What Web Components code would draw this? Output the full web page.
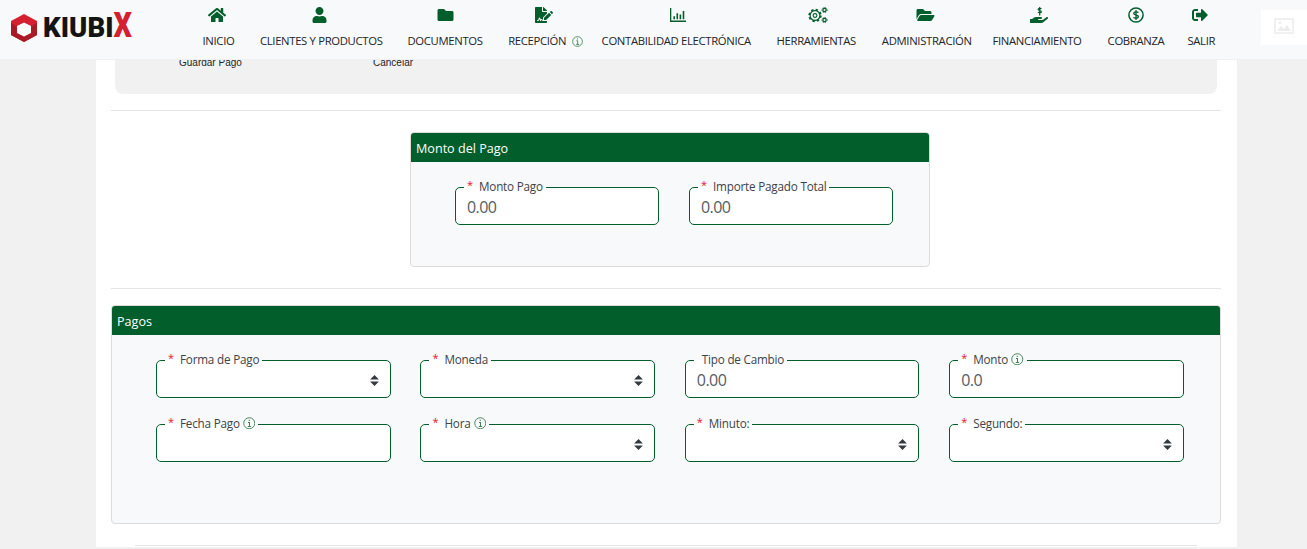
<!DOCTYPE html>
<html lang="es">
<head>
<meta charset="utf-8">
<title>Kiubix</title>
<style>
    html, body { margin: 0; height: 549px; overflow: hidden; }
    body { background: #f1f1f1; font-family: "Open Sans", "Noto Sans", sans-serif; color: #212529; }
</style>
</head>
<body>
<app-nav>
    <nav-item label="INICIO" w="58"><svg style="margin-left:-3px" viewBox="0 0 576 512" width="18" height="16" fill="#025e2b"><path d="M280.37 148.26L96 300.11V464a16 16 0 0 0 16 16l112.06-.29a16 16 0 0 0 15.92-16V368a16 16 0 0 1 16-16h64a16 16 0 0 1 16 16v95.64a16 16 0 0 0 16 16.05L464 480a16 16 0 0 0 16-16V300L295.67 148.26a12.19 12.19 0 0 0-15.3 0zM571.6 251.47L488 182.56V44.05a12 12 0 0 0-12-12h-56a12 12 0 0 0-12 12v72.61L318.47 43a48 48 0 0 0-61 0L4.34 251.47a12 12 0 0 0-1.6 16.9l25.5 31A12 12 0 0 0 45.15 301l235.22-193.74a12.19 12.19 0 0 1 15.3 0L530.9 301a12 12 0 0 0 16.9-1.6l25.5-31a12 12 0 0 0-1.7-16.93z"/></svg></nav-item>
    <nav-item label="CLIENTES Y PRODUCTOS" w="147.5"><svg style="margin-left:-3px" viewBox="0 0 448 512" width="15" height="16" fill="#025e2b"><path d="M224 256c70.7 0 128-57.3 128-128S294.7 0 224 0 96 57.3 96 128s57.3 128 128 128zm89.6 32h-16.7c-22.2 10.2-46.9 16-72.9 16s-50.6-5.8-72.9-16h-16.7C60.2 288 0 348.2 0 422.4V464c0 26.5 21.5 48 48 48h352c26.5 0 48-21.5 48-48v-41.6c0-74.2-60.2-134.4-134.4-134.4z"/></svg></nav-item>
    <nav-item label="DOCUMENTOS" w="100"><svg viewBox="0 0 512 512" width="17" height="16" fill="#025e2b"><path d="M464 128H272l-64-64H48C21.49 64 0 85.49 0 112v288c0 26.51 21.49 48 48 48h416c26.51 0 48-21.49 48-48V176c0-26.51-21.49-48-48-48z"/></svg></nav-item>
    <nav-item label="RECEPCIÓN" w="101.5" info><svg style="margin-left:-3.5px" viewBox="0 0 576 512" width="18" height="16" fill="#025e2b"><path d="M218.17 424.14c-2.95-5.92-8.09-6.52-10.17-6.52s-7.22.59-10.02 6.19l-7.67 15.34c-6.37 12.78-25.03 11.37-29.48-2.09L144 386.59l-10.61 31.88c-5.89 17.66-22.38 29.53-41 29.53H80c-8.84 0-16-7.16-16-16s7.16-16 16-16h12.39c4.83 0 9.11-3.08 10.64-7.66l18.19-54.64c3.3-9.81 12.44-16.41 22.78-16.41s19.48 6.59 22.77 16.41l13.88 41.64c19.75-16.19 54.06-9.7 66 14.16 1.89 3.78 5.49 5.95 9.36 6.26v-82.12l128-127.09V160H248c-13.2 0-24-10.8-24-24V0H24C10.7 0 0 10.7 0 24v464c0 13.3 10.7 24 24 24h336c13.3 0 24-10.7 24-24v-40l-128-.11c-16.12-.31-30.58-9.28-37.83-23.75zM384 121.9c0-6.3-2.5-12.4-7-16.9L279.1 7c-4.5-4.5-10.6-7-17-7H256v128h128v-6.1zm-96 225.06V416h68.99l161.68-162.78-67.88-67.88L288 346.96zm280.54-179.63l-31.87-31.87c-9.94-9.94-26.07-9.94-36.01 0l-27.25 27.25 67.88 67.88 27.25-27.25c9.95-9.94 9.95-26.07 0-36.01z"/></svg></nav-item>
    <nav-item label="CONTABILIDAD ELECTRÓNICA" w="159.5"><svg style="margin-left:3.5px" viewBox="0 0 16 14" width="16" height="14" fill="#025e2b"><path d="M0 0h1.3v12.4H16V14H0z"/><path d="M3.4 8.2h1.6v3h-1.6zM6.5 5.2h1.6v6h-1.6zM9.6 6.6h1.6v4.6H9.6zM12.7 3h1.6v8.2h-1.6z"/></svg></nav-item>
    <nav-item label="HERRAMIENTAS" w="120.5"><svg style="margin-left:3.5px" viewBox="0 0 20 16" width="20" height="16" fill="none" stroke="#025e2b"><circle cx="7" cy="8.5" r="4.9" stroke-width="1.2"/><circle cx="7" cy="8.5" r="5.9" stroke-width="1.6" stroke-dasharray="2.4 2.23"/><circle cx="7" cy="8.5" r="1.9" stroke-width="1.1"/><circle cx="16.5" cy="3" r="1.6" stroke-width="1.2"/><circle cx="16.5" cy="3" r="2.6" stroke-width="1" stroke-dasharray="1.2 1.2"/><circle cx="16.5" cy="13" r="1.6" stroke-width="1.2"/><circle cx="16.5" cy="13" r="2.6" stroke-width="1" stroke-dasharray="1.2 1.2"/></svg></nav-item>
    <nav-item label="ADMINISTRACIÓN" w="100.5"><svg style="margin-left:-2.5px" viewBox="0 0 576 512" width="19" height="16" fill="#025e2b"><path d="M572.694 292.093L500.27 416.248A63.997 63.997 0 0 1 444.989 448H45.025c-18.523 0-30.064-20.093-20.731-36.093l72.424-124.155A64 64 0 0 1 152 256h399.964c18.523 0 30.064 20.093 20.73 36.093zM152 224h328v-48c0-26.51-21.49-48-48-48H272l-64-64H48C21.49 64 0 85.49 0 112v278.046l69.077-118.418C86.214 242.25 117.989 224 152 224z"/></svg></nav-item>
    <nav-item label="FINANCIAMIENTO" w="120"><svg style="margin-left:4px" viewBox="0 0 576 512" width="18" height="16"><path fill="#025e2b" d="M565.3 328.1c-11.8-10.7-30.2-10-42.6 0L430.3 402a63.64 63.64 0 0 1-40 14H272a16 16 0 0 1 0-32h78.29c15.9 0 30.71-10.9 33.25-26.6a31.2 31.2 0 0 0 .46-5.46A32 32 0 0 0 352 320H192a117.66 117.66 0 0 0-74.1 26.29L71.4 384H16a16 16 0 0 0-16 16v96a16 16 0 0 0 16 16h356.77a64 64 0 0 0 40-14L564 377a32 32 0 0 0 1.3-48.9z"/><path fill="none" stroke="#025e2b" stroke-width="40" d="M364 60c-14-24-98-26-104 14-6 44 104 30 104 78 0 40-92 40-108 10M310 0v270"/></svg></nav-item>
    <nav-item label="COBRANZA" w="78"><svg viewBox="0 0 16 16" width="16" height="16" fill="none" stroke="#025e2b"><circle cx="8" cy="8" r="7.1" stroke-width="1.5"/><path stroke-width="1.3" d="M10.4 5.6C9.9 4.6 5.8 4.2 5.7 6.3 5.6 8.6 10.5 7.4 10.4 9.8 10.3 11.8 6.1 11.5 5.5 10.3M8 3v10"/></svg></nav-item>
    <nav-item label="SALIR" w="52.5"><svg style="margin-left:-2.5px" viewBox="0 0 512 512" width="16" height="16" fill="#025e2b"><path d="M497 273L329 441c-15 15-41 4.5-41-17v-96H152c-13.3 0-24-10.7-24-24v-96c0-13.3 10.7-24 24-24h136V88c0-21.4 25.9-32 41-17l168 168c9.3 9.4 9.3 24.6 0 34zM192 436v-40c0-6.6-5.4-12-12-12H96c-17.7 0-32-14.3-32-32V160c0-17.7 14.3-32 32-32h84c6.6 0 12-5.4 12-12V76c0-6.6-5.4-12-12-12H96c-53 0-96 43-96 96v192c0 53 43 96 96 96h84c6.6 0 12-5.4 12-12z"/></svg></nav-item>
</app-nav>
<page-body>
    <action-bar></action-bar>
    <x-rule></x-rule>
    <pay-card title="Monto del Pago" class="small">
        <out-field label="Monto Pago" value="0.00" required></out-field>
        <out-field label="Importe Pagado Total" value="0.00" required></out-field>
    </pay-card>
    <x-rule></x-rule>
    <pay-card title="Pagos">
        <out-field label="Forma de Pago" required select></out-field>
        <out-field label="Moneda" required select></out-field>
        <out-field label="Tipo de Cambio" value="0.00"></out-field>
        <out-field label="Monto" value="0.0" required info></out-field>
        <out-field label="Fecha Pago" required info></out-field>
        <out-field label="Hora" required info select></out-field>
        <out-field label="Minuto:" required select></out-field>
        <out-field label="Segundo:" required select></out-field>
    </pay-card>
    <x-rule class="inner"></x-rule>
</page-body>
<script>
const infoIcon = (size) => `<svg class="info" viewBox="0 0 12 12" width="${size}" height="${size}" fill="none" stroke="#3f7f58"><circle cx="6" cy="6" r="5.3" stroke-width=".9"/><path stroke-width="1" d="M4.8 5.2H6.2V9M4.6 9.2h3.2M6 2.6v1.2"/></svg>`;

class AppNav extends HTMLElement {
    constructor() {
        super();
        this.attachShadow({ mode: 'open' });
        this.shadowRoot.innerHTML = `
            <style>
                :host {
                    display: flex;
                    position: relative;
                    z-index: 5;
                    height: 59px;
                    box-sizing: border-box;
                    background: #f8f9fa;
                    box-shadow: 0 1px 0 #f0f0f0;
                    padding-left: 10px;
                }
                .logo {
                    display: flex;
                    align-items: center;
                    width: 122px;
                    height: 28px;
                    margin: 14px 57.5px 0 0;
                    flex: none;
                }
                .word {
                    font: 900 27.5px/28px Roboto, "Liberation Sans", sans-serif;
                    color: #141414;
                    margin-left: 5px;
                    letter-spacing: .1px;
                }
                .word span {
                    color: #d4202f;
                    display: inline-block;
                    transform: scale(1.05, 1.3);
                    transform-origin: 50% 80%;
                }
                .items { display: flex; }
                .ph {
                    margin: 10px 0 0 auto;
                    width: 46px;
                    height: 35px;
                    background: #fff;
                    display: flex;
                    align-items: center;
                    justify-content: center;
                }
            </style>
            <div class="logo">
                <svg viewBox="0 0 28 28" width="28" height="28">
                    <path fill="#d4202f" d="M14 0l13 7v14l-13 7-13-7V7z"/>
                    <path fill="#a81a26" d="M1 9l6 3.500v6.500l7 3.500v5.500L1 21zM27 9l-6 3.500v6.500l-7 3.500v5.500l13-7z"/>
                    <path fill="#fff" d="M14 8.500l7 3.500v7l-7 3.500-7-3.500v-7z"/>
                </svg>
                <div class="word">KIUBI<span>X</span></div>
            </div>
            <div class="items"><slot></slot></div>
            <div class="ph">
                <svg viewBox="0 0 20 20" width="20" height="20" fill="none" stroke="#ececec" stroke-width="1.500"><rect x="1" y="1" width="18" height="14"/><path fill="#ececec" stroke="none" d="M3 13l4-5 3 3 3-4 4 6z"/><circle cx="6" cy="5" r="1.400" fill="#ececec" stroke="none"/></svg>
            </div>
        `;
    }
}

class NavItem extends HTMLElement {
    constructor() {
        super();
        this.attachShadow({ mode: 'open' });
    }

    connectedCallback() {
        const extra = this.hasAttribute('info') ? infoIcon(11) : '';
        this.shadowRoot.innerHTML = `
            <style>
                :host {
                    display: flex;
                    flex-direction: column;
                    align-items: center;
                    width: ${this.getAttribute('w')}px;
                    padding-top: 7px;
                    box-sizing: border-box;
                }
                .icon { height: 16px; display: flex; align-items: center; }
                .label {
                    margin-top: 10px;
                    font-size: 11.300px;
                    letter-spacing: -.33px;
                    line-height: 16px;
                    white-space: nowrap;
                    color: #212529;
                    display: flex;
                    align-items: center;
                }
                .info { margin-left: 6px; }
            </style>
            <div class="icon"><slot></slot></div>
            <div class="label">${this.getAttribute('label')}${extra}</div>
        `;
    }
}

class PageBody extends HTMLElement {
    constructor() {
        super();
        this.attachShadow({ mode: 'open' });
        this.shadowRoot.innerHTML = `
            <style>
                :host {
                    display: block;
                    width: 1141px;
                    margin-left: 96px;
                    height: 490px;
                    background: #fff;
                }
            </style>
            <slot></slot>
        `;
    }
}

class ActionBar extends HTMLElement {
    constructor() {
        super();
        this.attachShadow({ mode: 'open' });
        this.shadowRoot.innerHTML = `
            <style>
                :host {
                    display: flex;
                    margin: -2px 20px 0 19px;
                    height: 37px;
                    background: #f1f1f1;
                    border-radius: 0 0 8px 8px;
                    font: 10px/12px "Liberation Sans", Arial, sans-serif;
                    color: #212529;
                }
                .save { margin-left: 64px; width: 194px; }
            </style>
            <div class="save">Guardar Pago</div>
            <div>Cancelar</div>
        `;
    }
}

class XRule extends HTMLElement {
    constructor() {
        super();
        this.attachShadow({ mode: 'open' });
        this.shadowRoot.innerHTML = `
            <style>
                :host {
                    display: block;
                    height: 1px;
                    margin: 16px 16px 0 15px;
                    background: #e5e5e5;
                }
                :host(.inner) { margin: 21px 40px 0 39px; }
            </style>
        `;
    }
}

class PayCard extends HTMLElement {
    constructor() {
        super();
        this.attachShadow({ mode: 'open' });
    }

    connectedCallback() {
        this.shadowRoot.innerHTML = `
            <style>
                :host {
                    display: block;
                    margin: 16px 16px 0 15px;
                    background: #f8f9fa;
                    border: 1px solid #dcdcdc;
                    border-radius: 4px;
                    box-sizing: border-box;
                    height: 219px;
                    overflow: hidden;
                }
                :host(.small) {
                    width: 520px;
                    height: 135px;
                    margin: 21px 0 21px 314px;
                }
                header {
                    background: #025e2b;
                    color: #fff;
                    height: 29px;
                    padding-left: 5px;
                    font-size: 12.600px;
                    line-height: 32px;
                }
                .grid {
                    display: grid;
                    grid-template-columns: repeat(4, 234.500px);
                    column-gap: 29.900px;
                    row-gap: 26px;
                    padding: 25px 0 0 44px;
                }
                :host(.small) .grid {
                    grid-template-columns: 204px 204px;
                    column-gap: 30px;
                }
            </style>
            <header>${this.getAttribute('title')}</header>
            <div class="grid"><slot></slot></div>
        `;
    }
}

class OutField extends HTMLElement {
    constructor() {
        super();
        this.attachShadow({ mode: 'open' });
    }

    connectedCallback() {
        const star = this.hasAttribute('required') ? '<span class="star">*</span>' : '';
        const info = this.hasAttribute('info') ? infoIcon(12.5) : '';
        const arrows = this.hasAttribute('select')
            ? '<svg class="arrows" viewBox="0 0 8 10" width="9" height="11" fill="#343a40"><path d="M4 0L0 4h8zM4 10L0 6h8z"/></svg>'
            : '';
        this.shadowRoot.innerHTML = `
            <style>
                :host { display: block; margin-top: -8px; }
                fieldset {
                    margin: 0;
                    padding: 0 11px 0 11px;
                    border: 1px solid #025e2b;
                    border-radius: 5px;
                    min-width: 0;
                    display: block;
                    background: #fff;
                }
                legend {
                    margin-left: -3px;
                    padding: 0 3px 2px;
                    font-size: 11.700px;
                    letter-spacing: -.2px;
                    line-height: 14px;
                    color: #3d4348;
                    display: flex;
                    align-items: center;
                    white-space: nowrap;
                }
                .star {
                    color: #e8132b;
                    width: 12px;
                    font-size: 11px;
                    position: relative;
                    top: -1px;
                }
                :host(:not([required])) legend { padding-left: 8px; }
                .info { margin-left: 3px; }
                .box {
                    height: 29px;
                    box-sizing: border-box;
                    padding-bottom: 5px;
                    display: flex;
                    align-items: center;
                    justify-content: space-between;
                    font-size: 16px;
                    letter-spacing: -.55px;
                    line-height: 24px;
                    color: #555c63;
                }
            </style>
            <fieldset>
                <legend>${star}<span>${this.getAttribute('label')}</span>${info}</legend>
                <div class="box"><span>${this.getAttribute('value') || ''}</span>${arrows}</div>
            </fieldset>
        `;
    }
}

customElements.define('app-nav', AppNav);
customElements.define('nav-item', NavItem);
customElements.define('page-body', PageBody);
customElements.define('action-bar', ActionBar);
customElements.define('x-rule', XRule);
customElements.define('pay-card', PayCard);
customElements.define('out-field', OutField);
</script>
</body>
</html>
